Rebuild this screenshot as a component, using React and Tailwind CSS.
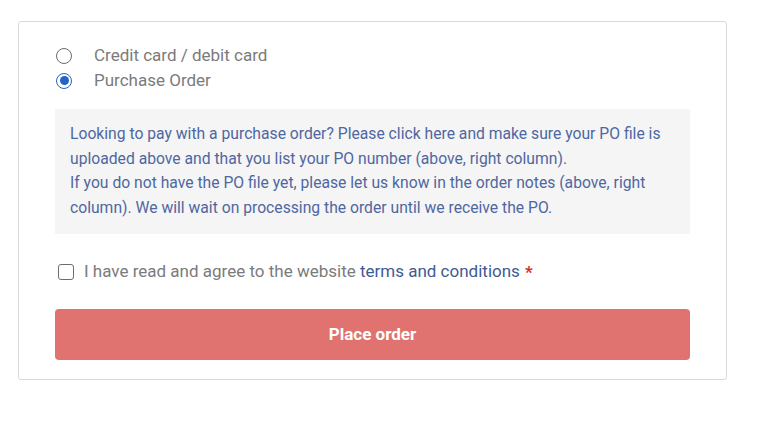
export default function App() {
  return (
    <div className="min-h-screen bg-white pt-[21px] pl-[18px] font-['Roboto',sans-serif]">
      <div className="w-[709px] h-[359px] border border-[#d9d9d9] rounded-[3px] px-[36px] pt-[21px]">
        {/* Payment methods */}
        <ul>
          <li className="flex items-center h-[25px]">
            <span className="ml-[1px] w-[16px] h-[16px] rounded-full border-[1.5px] border-[#6d6d6d] bg-white" />
            <span className="ml-[22px] text-[17px] text-[#7b7b7b]">Credit card / debit card</span>
          </li>
          <li className="flex items-center h-[25px]">
            <span className="ml-[1px] w-[16px] h-[16px] rounded-full border-[1.5px] border-[#2563c4] flex items-center justify-center">
              <span className="w-[9px] h-[9px] rounded-full bg-[#2563c4]" />
            </span>
            <span className="ml-[22px] text-[17px] text-[#7b7b7b]">Purchase Order</span>
          </li>
        </ul>

        <div className="mt-[16px] bg-[#f5f5f6] px-[15px] pt-[13px] pb-[14px] text-[15.7px] leading-[24.5px] text-[#4f67a0]">
          <p>
            Looking to pay with a purchase order? Please click here and make sure your PO file is uploaded above and that you list your PO number (above, right column).
          </p>
          <p>
            If you do not have the PO file yet, please let us know in the order notes (above, right column). We will wait on processing the order until we receive the PO.
          </p>
        </div>

        <label className="mt-[28px] flex items-center h-[20px] text-[17px]">
          <span className="ml-[3px] w-[16px] h-[16px] rounded-[3px] border-[1.5px] border-[#6d6d6d] bg-white" />
          <span className="ml-[10px] text-[#7b7b7b]">
            I have read and agree to the website{" "}
            <span className="text-[#3f5a93]">terms and conditions</span>
          </span>
          <span className="ml-[5px] text-[#d0322b] font-bold self-start -mt-[2px]">*</span>
        </label>

        <button className="mt-[27px] w-full h-[51px] rounded-[4px] bg-[#e0736f] text-white font-bold text-[17px]">
          Place order
        </button>
      </div>
    </div>
  );
}
